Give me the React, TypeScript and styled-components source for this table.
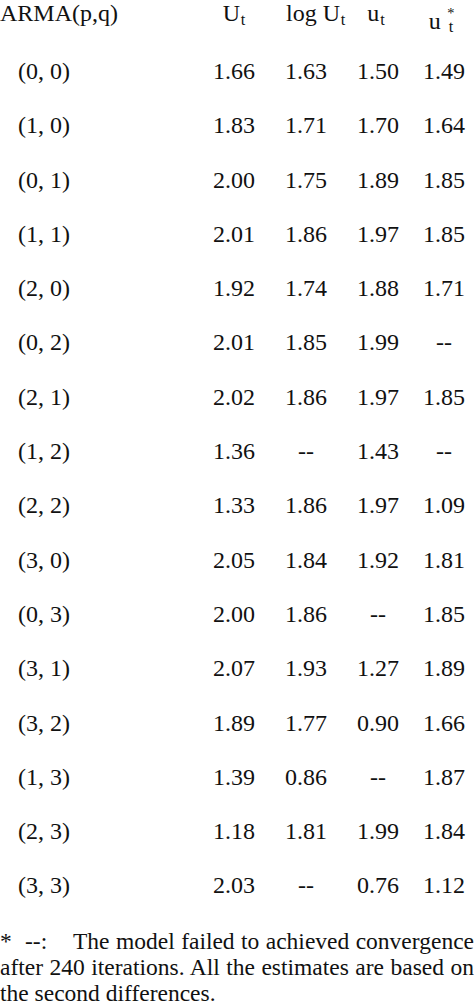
import React from 'react';
import styled, { createGlobalStyle } from 'styled-components';

type Row = {
  model: string;
  values: string[];
};

const rows: Row[] = [
  { model: '(0, 0)', values: ['1.66', '1.63', '1.50', '1.49'] },
  { model: '(1, 0)', values: ['1.83', '1.71', '1.70', '1.64'] },
  { model: '(0, 1)', values: ['2.00', '1.75', '1.89', '1.85'] },
  { model: '(1, 1)', values: ['2.01', '1.86', '1.97', '1.85'] },
  { model: '(2, 0)', values: ['1.92', '1.74', '1.88', '1.71'] },
  { model: '(0, 2)', values: ['2.01', '1.85', '1.99', '--'] },
  { model: '(2, 1)', values: ['2.02', '1.86', '1.97', '1.85'] },
  { model: '(1, 2)', values: ['1.36', '--', '1.43', '--'] },
  { model: '(2, 2)', values: ['1.33', '1.86', '1.97', '1.09'] },
  { model: '(3, 0)', values: ['2.05', '1.84', '1.92', '1.81'] },
  { model: '(0, 3)', values: ['2.00', '1.86', '--', '1.85'] },
  { model: '(3, 1)', values: ['2.07', '1.93', '1.27', '1.89'] },
  { model: '(3, 2)', values: ['1.89', '1.77', '0.90', '1.66'] },
  { model: '(1, 3)', values: ['1.39', '0.86', '--', '1.87'] },
  { model: '(2, 3)', values: ['1.18', '1.81', '1.99', '1.84'] },
  { model: '(3, 3)', values: ['2.03', '--', '0.76', '1.12'] },
];

const App = () => {
  return (
    <>
      <GlobalStyle />
      <Page>
        <HeaderRow>
          <LabelCell>ARMA(p,q)</LabelCell>
          <NumCell>
            U<Sub>t</Sub>
          </NumCell>
          <NumCell $nudge={16}>
            log U<Sub>t</Sub>
          </NumCell>
          <NumCell $nudge={-4}>
            u<Sub>t</Sub>
          </NumCell>
          <NumCell $nudge={-6}>
            u<Sup>*</Sup>
            <Sub $pull>t</Sub>
          </NumCell>
        </HeaderRow>

        {rows.map((row) => (
          <DataRow key={row.model}>
            <LabelCell $indent>{row.model}</LabelCell>
            {row.values.map((value, index) => (
              <NumCell key={index}>{value}</NumCell>
            ))}
          </DataRow>
        ))}

        <Footnote>
          <Mark $width={25}>*</Mark>
          <Mark $width={48}>--:</Mark>
          The model failed to achieved convergence after 240 iterations. All the
          estimates are based on the second differences.
        </Footnote>
      </Page>
    </>
  );
};

export default App;

const GlobalStyle = createGlobalStyle`
  html, body {
    margin: 0;
    padding: 0;
    background: #ffffff;
  }
  body {
    font-family: "Liberation Serif", "Times New Roman", serif;
    color: #111111;
  }
`;

const Page = styled.div`
  width: 474px;
  display: flex;
  flex-direction: column;
`;

const DataRow = styled.div`
  display: grid;
  grid-template-columns: 198px 72px 72px 72px 60px;
  height: 54.3px;
  align-items: center;
  font-size: 24px;
  line-height: 27px;
`;

const HeaderRow = styled(DataRow)`
  height: 44.35px;
  align-items: start;
`;

const LabelCell = styled.div<{ $indent?: boolean }>`
  padding-left: ${(p) => (p.$indent ? '18px' : '0')};
  white-space: nowrap;
`;

const NumCell = styled.div<{ $nudge?: number }>`
  text-align: center;
  white-space: nowrap;
  padding-left: ${(p) => (p.$nudge && p.$nudge > 0 ? p.$nudge : 0)}px;
  padding-right: ${(p) => (p.$nudge && p.$nudge < 0 ? -p.$nudge : 0)}px;
`;

const Sub = styled.span<{ $pull?: boolean }>`
  font-size: 0.68em;
  vertical-align: -0.22em;
  margin-left: ${(p) => (p.$pull ? '-0.35em' : '0.05em')};
`;

const Sup = styled.span`
  font-size: 0.6em;
  vertical-align: 0.75em;
  margin-left: 0.45em;
`;

const Footnote = styled.p`
  margin: 14.5px 0 0;
  font-size: 23.5px;
  line-height: 26px;
  text-align: justify;
`;

const Mark = styled.span<{ $width: number }>`
  display: inline-block;
  width: ${(p) => p.$width}px;
`;
